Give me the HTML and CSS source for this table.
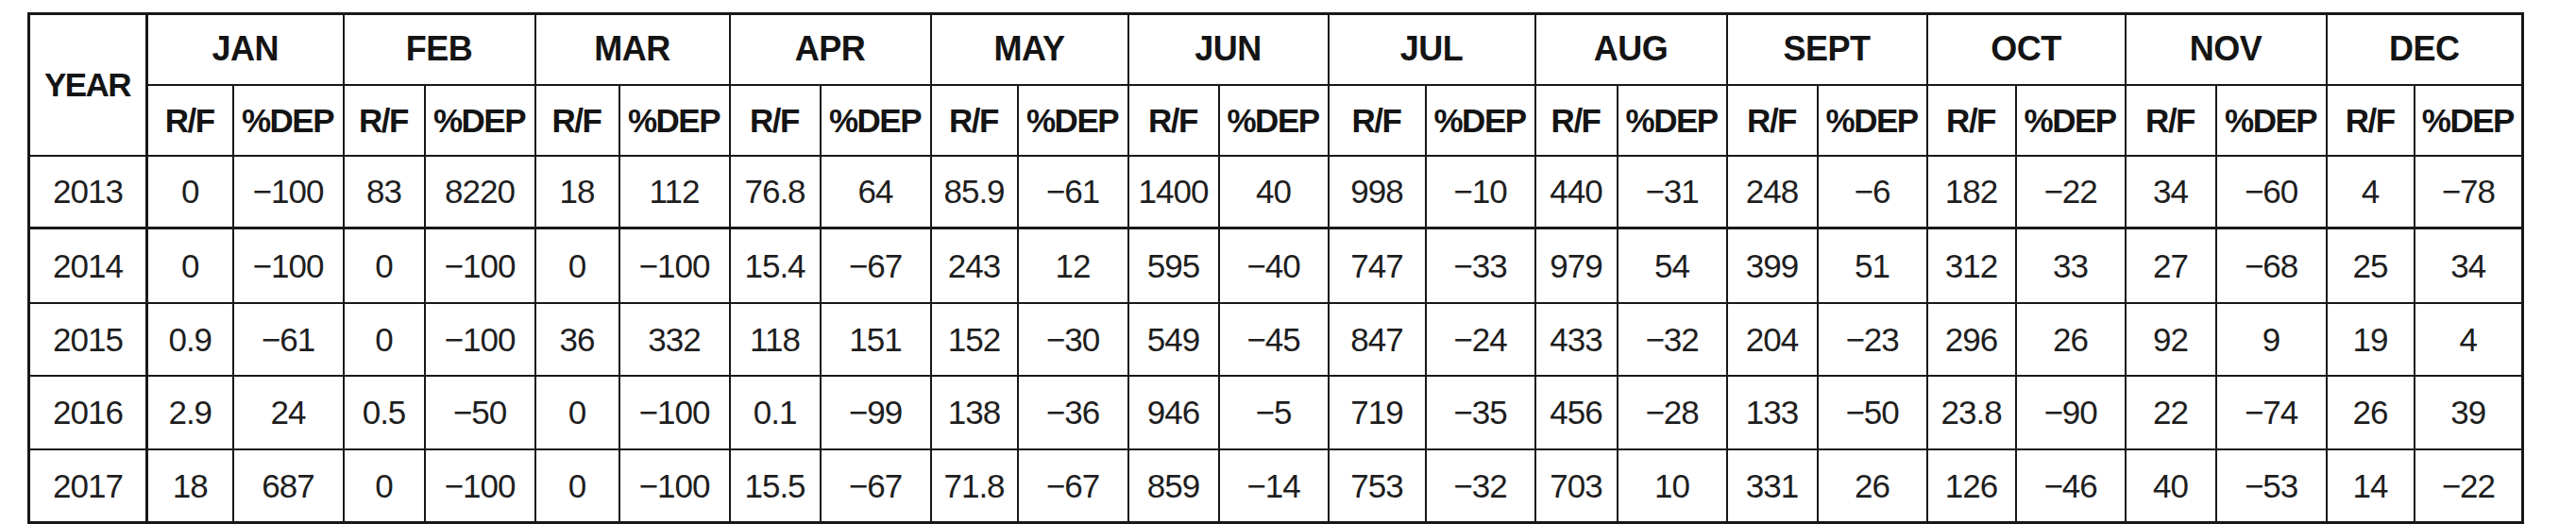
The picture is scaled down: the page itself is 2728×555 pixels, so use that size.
FILE: index.html
```html
<!DOCTYPE html>
<html lang="en">
<head>
<meta charset="utf-8">
<title>Monthly rainfall and departure</title>
<link rel="stylesheet" href="styles.css">
</head>
<body>
<div class="sheet">
<table class="rain">
<colgroup>
<col><col><col><col><col><col><col><col><col><col><col><col><col><col><col><col><col><col><col><col><col><col><col><col><col>
</colgroup>
<thead>
<tr class="h1">
<th rowspan="2" class="year">YEAR</th>
<th colspan="2" class="month">JAN</th><th colspan="2" class="month">FEB</th><th colspan="2" class="month">MAR</th><th colspan="2" class="month">APR</th><th colspan="2" class="month">MAY</th><th colspan="2" class="month">JUN</th><th colspan="2" class="month">JUL</th><th colspan="2" class="month">AUG</th><th colspan="2" class="month">SEPT</th><th colspan="2" class="month">OCT</th><th colspan="2" class="month">NOV</th><th colspan="2" class="month">DEC</th>
</tr>
<tr class="h2">
<th>R/F</th><th>%DEP</th><th>R/F</th><th>%DEP</th><th>R/F</th><th>%DEP</th><th>R/F</th><th>%DEP</th><th>R/F</th><th>%DEP</th><th>R/F</th><th>%DEP</th><th>R/F</th><th>%DEP</th><th>R/F</th><th>%DEP</th><th>R/F</th><th>%DEP</th><th>R/F</th><th>%DEP</th><th>R/F</th><th>%DEP</th><th>R/F</th><th>%DEP</th>
</tr>
</thead>
<tbody>
<tr class="r1">
<td>2013</td><td>0</td><td>−100</td><td>83</td><td>8220</td><td>18</td><td>112</td><td>76.8</td><td>64</td><td>85.9</td><td>−61</td><td>1400</td><td>40</td><td>998</td><td>−10</td><td>440</td><td>−31</td><td>248</td><td>−6</td><td>182</td><td>−22</td><td>34</td><td>−60</td><td>4</td><td>−78</td>
</tr>
<tr class="r2">
<td>2014</td><td>0</td><td>−100</td><td>0</td><td>−100</td><td>0</td><td>−100</td><td>15.4</td><td>−67</td><td>243</td><td>12</td><td>595</td><td>−40</td><td>747</td><td>−33</td><td>979</td><td>54</td><td>399</td><td>51</td><td>312</td><td>33</td><td>27</td><td>−68</td><td>25</td><td>34</td>
</tr>
<tr class="r3">
<td>2015</td><td>0.9</td><td>−61</td><td>0</td><td>−100</td><td>36</td><td>332</td><td>118</td><td>151</td><td>152</td><td>−30</td><td>549</td><td>−45</td><td>847</td><td>−24</td><td>433</td><td>−32</td><td>204</td><td>−23</td><td>296</td><td>26</td><td>92</td><td>9</td><td>19</td><td>4</td>
</tr>
<tr class="r4">
<td>2016</td><td>2.9</td><td>24</td><td>0.5</td><td>−50</td><td>0</td><td>−100</td><td>0.1</td><td>−99</td><td>138</td><td>−36</td><td>946</td><td>−5</td><td>719</td><td>−35</td><td>456</td><td>−28</td><td>133</td><td>−50</td><td>23.8</td><td>−90</td><td>22</td><td>−74</td><td>26</td><td>39</td>
</tr>
<tr class="r5">
<td>2017</td><td>18</td><td>687</td><td>0</td><td>−100</td><td>0</td><td>−100</td><td>15.5</td><td>−67</td><td>71.8</td><td>−67</td><td>859</td><td>−14</td><td>753</td><td>−32</td><td>703</td><td>10</td><td>331</td><td>26</td><td>126</td><td>−46</td><td>40</td><td>−53</td><td>14</td><td>−22</td>
</tr>
</tbody>
</table>
</div>
</body>
</html>
```

FILE: styles.css
```css
html, body {
  margin: 0;
  padding: 0;
  background: #ffffff;
}

.sheet {
  padding: 13px 0 0 29px;
}

.rain {
  border-collapse: collapse;
  table-layout: fixed;
  width: 2644px;
  border: 3px solid #181818;
  font-family: "Liberation Sans", Arial, Helvetica, sans-serif;
  font-size: 35px;
  line-height: 1;
  color: #1e1e1e;
}

.rain th,
.rain td {
  border: 2px solid #181818;
  padding: 0;
  text-align: center;
  vertical-align: middle;
  white-space: nowrap;
  overflow: hidden;
}

.rain th {
  font-weight: bold;
  color: #141414;
  letter-spacing: -1.5px;
  text-indent: -1px;
}

.rain th.month {
  font-size: 36px;
  letter-spacing: -0.5px;
  text-indent: 0;
}

.rain td {
  font-weight: normal;
  letter-spacing: -1px;
}

.rain .year {
  border-right-width: 3px;
}

.rain .h1 { height: 75px; }
.rain .h2 { height: 75px; }
.rain .r1 { height: 77px; }
.rain .r2 { height: 79px; }
.rain .r3 { height: 77px; }
.rain .r4 { height: 78px; }
.rain .r5 { height: 78px; }

.rain .r1 td {
  border-bottom-width: 3px;
}

.rain tbody td:first-child {
  border-right-width: 3px;
}

/* column widths (rule to rule) */
.rain col:nth-child(1)  { width: 125px; }
.rain col:nth-child(2)  { width: 91px; }
.rain col:nth-child(3)  { width: 117px; }
.rain col:nth-child(4)  { width: 86px; }
.rain col:nth-child(5)  { width: 117px; }
.rain col:nth-child(6)  { width: 89px; }
.rain col:nth-child(7)  { width: 117px; }
.rain col:nth-child(8)  { width: 96px; }
.rain col:nth-child(9)  { width: 117px; }
.rain col:nth-child(10) { width: 92px; }
.rain col:nth-child(11) { width: 117px; }
.rain col:nth-child(12) { width: 96px; }
.rain col:nth-child(13) { width: 116px; }
.rain col:nth-child(14) { width: 103px; }
.rain col:nth-child(15) { width: 116px; }
.rain col:nth-child(16) { width: 87px; }
.rain col:nth-child(17) { width: 116px; }
.rain col:nth-child(18) { width: 96px; }
.rain col:nth-child(19) { width: 116px; }
.rain col:nth-child(20) { width: 94px; }
.rain col:nth-child(21) { width: 116px; }
.rain col:nth-child(22) { width: 96px; }
.rain col:nth-child(23) { width: 117px; }
.rain col:nth-child(24) { width: 93px; }
.rain col:nth-child(25) { width: 115px; }
```
